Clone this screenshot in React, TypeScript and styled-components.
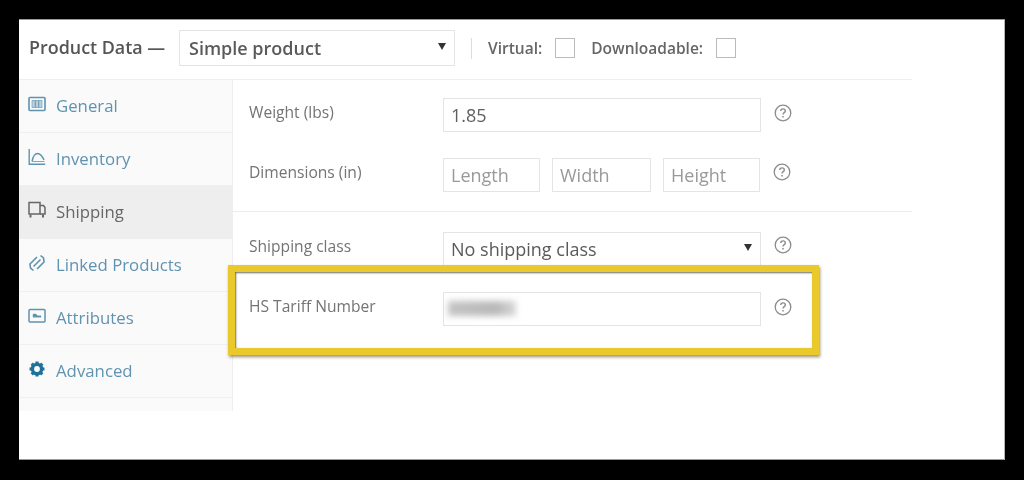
import styled, { createGlobalStyle } from "styled-components";

const GlobalStyle = createGlobalStyle`
  html, body { margin: 0; padding: 0; background: #000; overflow: hidden; }
  body { font-family: "Open Sans", "Liberation Sans", sans-serif; }
`;

const Page = styled.div`
  width: 1024px;
  height: 480px;
  padding: 19px 19px 20px;
  box-sizing: border-box;
  background: #000;
`;

const Panel = styled.div`
  position: relative;
  width: 986px;
  height: 441px;
  background: #fff;
  box-shadow: inset 0 1px 0 #9a9a9a, inset -1px 0 0 #b5b5b5, inset 0 -1px 0 #9a9a9a;
  filter: blur(0.6px);
`;

const Header = styled.div`
  width: 893px;
  height: 61px;
  box-sizing: border-box;
  padding: 11px 0 0 10px;
  display: flex;
  align-items: flex-start;
  border-bottom: 1px solid #eeeeee;
`;

const Title = styled.div`
  font-size: 17.9px;
  font-weight: 600;
  line-height: 35px;
  color: #555;
  width: 150px;
  white-space: nowrap;
`;

const Select = styled.div<{ $width: number; $height: number }>`
  width: ${(p) => p.$width}px;
  height: ${(p) => p.$height}px;
  box-sizing: border-box;
  border: 1px solid #e4e4e4;
  display: flex;
  align-items: center;
  justify-content: space-between;
  padding: 0 8px 0 7px;
  font-size: 18px;
  color: #5a5a5a;
  background: #fff;
`;

const HeaderSelect = styled(Select)`
  font-weight: 600;
  font-size: 18px;
  padding: 0 8px 0 9px;
`;

const Caret = styled.span`
  width: 0;
  height: 0;
  margin-bottom: 3px;
  border-left: 4px solid transparent;
  border-right: 4px solid transparent;
  border-top: 7px solid #333;
`;

const Separator = styled.div`
  width: 1px;
  height: 21px;
  background: #ddd;
  margin: 8px 16px 0;
`;

const CheckLabel = styled.label`
  font-size: 15.5px;
  font-weight: 600;
  line-height: 36px;
  color: #666;
  margin-right: 13px;
  white-space: nowrap;
`;

const Checkbox = styled.span<{ $gap: number }>`
  width: 20px;
  height: 20px;
  margin: 8px ${(p) => p.$gap}px 0 0;
  box-sizing: border-box;
  border: 1px solid #bbb;
  background: #fff;
`;

const Body = styled.div`
  display: flex;
  width: 893px;
`;

const Sidebar = styled.div`
  width: 214px;
  height: 331px;
  flex-shrink: 0;
  box-sizing: border-box;
  background: #fafafa;
  border-right: 1px solid #eeeeee;
`;

const Tab = styled.div<{ $active?: boolean }>`
  height: 53px;
  box-sizing: border-box;
  padding: 0 0 2px 9px;
  display: flex;
  align-items: center;
  gap: 10px;
  font-size: 16.8px;
  color: ${(p) => (p.$active ? "#666" : "#5f93b0")};
  background: ${(p) => (p.$active ? "#eeeeee" : "transparent")};
  border-bottom: 1px solid ${(p) => (p.$active ? "#eeeeee" : "#f0f0f0")};

  svg {
    width: 18px;
    height: 18px;
    flex-shrink: 0;
    margin-top: -3px;
    color: ${(p) => (p.$active ? "#666" : "#5f93b0")};
  }
`;

const Main = styled.div`
  flex: 1;
  min-width: 0;
`;

const Section = styled.div<{ $divided?: boolean }>`
  padding: ${(p) => (p.$divided ? "18px 0 19px 16px" : "20px 0 0 16px")};
  box-sizing: border-box;
  border-bottom: ${(p) => (p.$divided ? "1px solid #ececec" : "none")};
  display: flex;
  flex-direction: column;
  gap: 26px;
`;

const Row = styled.div`
  display: flex;
  align-items: flex-start;
  height: 34px;
`;

const Label = styled.div`
  width: 194px;
  font-size: 15.6px;
  line-height: 29px;
  color: #747474;
  flex-shrink: 0;
  white-space: nowrap;
`;

const Input = styled.div<{ $width: number; $muted?: boolean }>`
  width: ${(p) => p.$width}px;
  height: 34px;
  box-sizing: border-box;
  border: 1px solid #e4e4e4;
  padding-left: 7px;
  font-size: 18px;
  line-height: 33px;
  color: ${(p) => (p.$muted ? "#999" : "#5f5f5f")};
  background: #fff;
`;

const Dimensions = styled.div`
  display: flex;
  gap: 12px;
`;

const Help = styled.span<{ $top: number }>`
  width: 18px;
  height: 18px;
  margin: ${(p) => p.$top}px 0 0 13px;
  color: #8c8c8c;

  svg {
    display: block;
    width: 18px;
    height: 18px;
  }
`;

const BlurredValue = styled.div`
  width: 68px;
  height: 15px;
  margin: 8px 0 0 -3px;
  background: linear-gradient(90deg, #c4c4c4, #b8b8b8 70%, #d8d8d8);
  filter: blur(3px);
`;

const Highlight = styled.div`
  position: absolute;
  left: 209px;
  top: 246px;
  width: 591px;
  height: 90px;
  box-sizing: border-box;
  border: 7px solid #e9c92b;
  box-shadow: 1px 2px 3px rgba(80, 70, 20, 0.6), inset 1px 1px 2px rgba(70, 70, 50, 0.8);
  pointer-events: none;
`;

const HelpIcon = ({ top = 6 }: { top?: number }) => (
  <Help $top={top}>
    <svg viewBox="0 0 18 18" fill="none" stroke="currentColor">
      <circle cx="9" cy="9" r="7.8" strokeWidth="1.3" />
      <path d="M6.7 7.1c0-1.4 1-2.2 2.3-2.2s2.3.8 2.3 2c0 1.7-2.3 1.7-2.3 3.6" strokeWidth="1.4" />
      <path d="M9 12v1.6" strokeWidth="1.5" />
    </svg>
  </Help>
);

const GeneralIcon = () => (
  <svg viewBox="0 0 18 18" fill="none" stroke="currentColor">
    <rect x="1" y="2.5" width="16" height="13" strokeWidth="1.6" rx="1" />
    <path d="M4 5.5h10v7H4z" fill="currentColor" fillOpacity=".4" strokeWidth=".6" />
    <path d="M7.3 5.5v7M10.7 5.5v7" strokeWidth="1" />
  </svg>
);

const InventoryIcon = () => (
  <svg viewBox="0 0 18 18" fill="none" stroke="currentColor" strokeWidth="1.4">
    <path d="M1.2 1v15.3h16" />
    <path d="M4 13.5C5 8.5 7 5.5 9.5 5.5s4.5 2 6.5 6.5" />
    <path d="M4.5 13.5h12" strokeWidth=".8" />
  </svg>
);

const ShippingIcon = () => (
  <svg viewBox="0 0 18 18" fill="none" stroke="currentColor" strokeWidth="1.5">
    <path d="M1 1.5h11V13H1z" />
    <path d="M12 4.5h3.5l1.5 2V13h-5" />
    <path d="M2.5 13.5v3M15 13.5v3" strokeWidth="2" />
  </svg>
);

const LinkedIcon = () => (
  <svg viewBox="0 0 18 18" fill="none" stroke="currentColor" strokeWidth="1.6">
    <path d="M9 3l-7 7 .5 4 3 2.500" />
    <path d="M5.500 12.500l7-7" />
    <path d="M9 15l7-7-.5-4-3-2.500" />
  </svg>
);

const AttributesIcon = () => (
  <svg viewBox="0 0 18 18" fill="none" stroke="currentColor">
    <rect x="1" y="2.5" width="16" height="12.5" rx="1" strokeWidth="1.5" />
    <path d="M5 7h3l1.5 1.8H13v1.4H5z" fill="currentColor" strokeWidth=".4" />
  </svg>
);

const AdvancedIcon = () => (
  <svg viewBox="0 0 18 18" style={{ color: "#1f7299" }}>
    <circle cx="9" cy="9" r="4.6" fill="none" stroke="currentColor" strokeWidth="3.4" />
    <path
      d="M7.4 1.5h3.2v3H7.4zM7.4 13.5h3.2v3H7.4zM1.5 7.4h3v3.2h-3zM13.5 7.4h3v3.2h-3z"
      fill="currentColor"
    />
    <path
      d="M7.4 1.5h3.2v3H7.4zM7.4 13.5h3.2v3H7.4zM1.5 7.4h3v3.2h-3zM13.5 7.4h3v3.2h-3z"
      fill="currentColor"
      transform="rotate(45 9 9)"
    />
  </svg>
);

const tabs = [
  { name: "General", icon: <GeneralIcon /> },
  { name: "Inventory", icon: <InventoryIcon /> },
  { name: "Shipping", icon: <ShippingIcon />, active: true },
  { name: "Linked Products", icon: <LinkedIcon /> },
  { name: "Attributes", icon: <AttributesIcon /> },
  { name: "Advanced", icon: <AdvancedIcon /> },
];

export default function App() {
  return (
    <Page>
      <GlobalStyle />
      <Panel>
        <Header>
          <Title>Product Data —</Title>
          <HeaderSelect $width={276} $height={36}>
            Simple product
            <Caret />
          </HeaderSelect>
          <Separator />
          <CheckLabel>Virtual:</CheckLabel>
          <Checkbox $gap={16} />
          <CheckLabel>Downloadable:</CheckLabel>
          <Checkbox $gap={0} />
        </Header>
        <Body>
          <Sidebar>
            {tabs.map((t) => (
              <Tab key={t.name} $active={t.active}>
                {t.icon}
                {t.name}
              </Tab>
            ))}
          </Sidebar>
          <Main>
            <Section $divided>
              <Row>
                <Label>Weight (lbs)</Label>
                <Input $width={318}>1.85</Input>
                <HelpIcon />
              </Row>
              <Row>
                <Label>Dimensions (in)</Label>
                <Dimensions>
                  <Input $width={97} $muted>Length</Input>
                  <Input $width={99} $muted>Width</Input>
                  <Input $width={97} $muted>Height</Input>
                </Dimensions>
                <HelpIcon top={5} />
              </Row>
            </Section>
            <Section>
              <Row>
                <Label>Shipping class</Label>
                <Select $width={318} $height={34}>
                  No shipping class
                  <Caret />
                </Select>
                <HelpIcon top={4} />
              </Row>
              <Row>
                <Label>HS Tariff Number</Label>
                <Input $width={318}>
                  <BlurredValue />
                </Input>
                <HelpIcon />
              </Row>
            </Section>
          </Main>
        </Body>
        <Highlight />
      </Panel>
    </Page>
  );
}
